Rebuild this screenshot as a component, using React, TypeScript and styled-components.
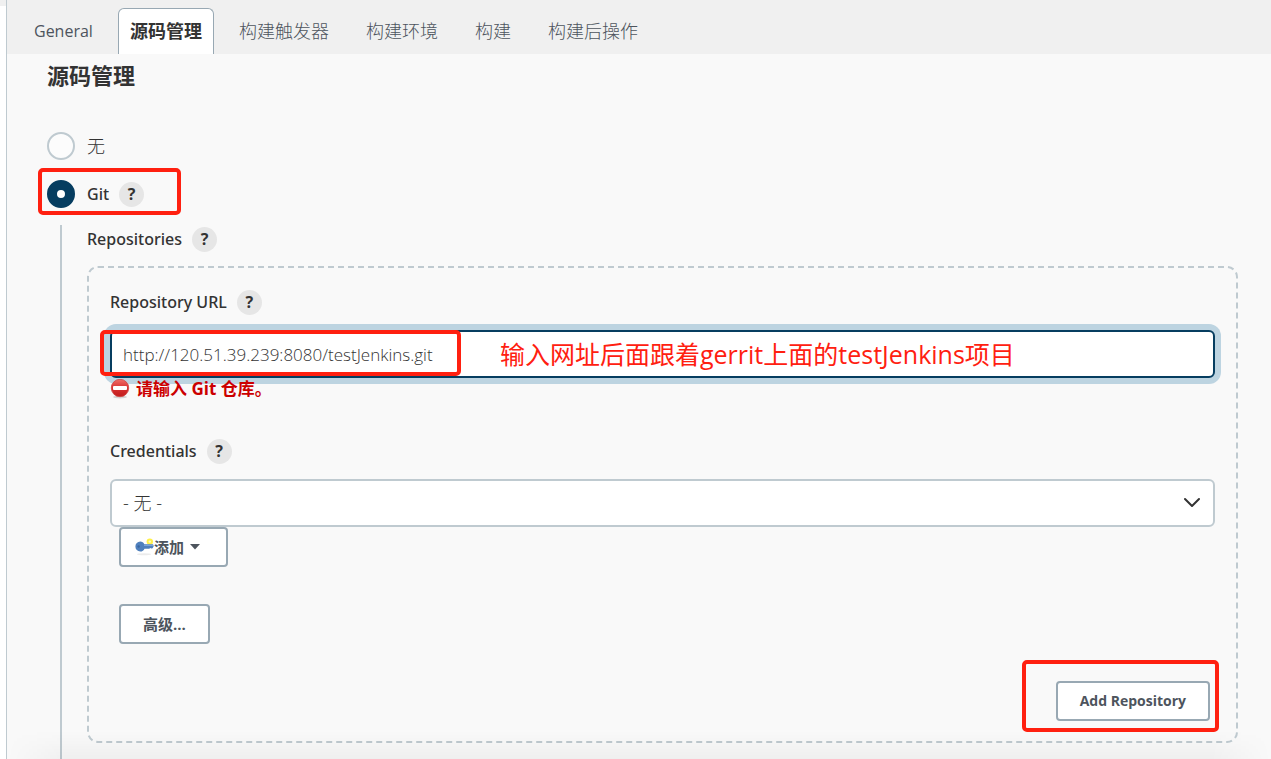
import React from "react";
import styled, { createGlobalStyle, css } from "styled-components";

const GlobalStyle = createGlobalStyle`
  *, *::before, *::after { box-sizing: border-box; }
  body {
    margin: 0;
    background: #fff;
    color: #333;
    font: 16px/24px "Open Sans", "Noto Sans", "Noto Sans CJK SC", sans-serif;
  }
  button, input, select { font: inherit; color: inherit; }
`;

const Page = styled.div`
  position: relative;
  min-height: 100vh;
  padding-left: 6px;
  overflow: hidden;
  background: linear-gradient(#f0f0f0, #f0f0f0) 0 0 / 30px 6px no-repeat #fff;
`;

const Panel = styled.main`
  min-height: 100vh;
  background: #f9f9f9;
  border-left: 1px solid #bfcad0;
`;

const TabBar = styled.nav`
  display: flex;
  align-items: flex-end;
  gap: 13px;
  height: 54px;
  padding-left: 15px;
  background: #f0f0f0;
`;

const Tab = styled.a<{ $active?: boolean; $latin?: boolean }>`
  height: 46px;
  padding: 0 11px;
  border: 1px solid transparent;
  border-bottom: 0;
  border-radius: 6px 6px 0 0;
  font-size: ${(p) => (p.$latin ? 16 : 18)}px;
  font-weight: ${(p) => (p.$latin ? 400 : 300)};
  line-height: 45px;
  color: #4d545d;
  text-decoration: none;
  white-space: nowrap;
  ${(p) =>
    p.$active &&
    css`
      background: #fff;
      border-color: #98a8b3;
      color: #333;
      font-weight: 700;
    `}
`;

const Content = styled.div`
  padding: 5px 33px 0 40px;
`;

const Heading = styled.h2`
  margin: 0 0 41px;
  font-size: 22px;
  line-height: 32px;
`;

const RadioRow = styled.div`
  position: relative;
  display: flex;
  align-items: center;
  width: max-content;
  height: 28px;
  margin-bottom: 20px;
`;

const RadioLabel = styled.label<{ $large?: boolean }>`
  display: flex;
  align-items: center;
  gap: 12px;
  font-family: "Noto Sans", "Noto Sans CJK SC", sans-serif;
  font-size: ${(p) => (p.$large ? 18 : 16)}px;
  font-weight: ${(p) => (p.$large ? 300 : 500)};
`;

const Radio = styled.input.attrs({ type: "radio" })`
  appearance: none;
  width: 28px;
  height: 28px;
  margin: 0;
  border: 2px solid #bfcad0;
  border-radius: 50%;
  background: #fcfcfc;
  &:checked {
    border: 10px solid #063d60;
    background: #fff;
  }
`;

const HelpButton = styled.button`
  width: 25px;
  height: 25px;
  margin-left: 10px;
  padding: 0;
  border: 0;
  border-radius: 50%;
  background: #e6e6e6;
  font-size: 16px;
  font-weight: 700;
  line-height: 25px;
  text-align: center;
`;

const Nested = styled.section`
  margin: -3px 0 0 13px;
  padding: 1px 0 16px 25px;
  border-left: 2px solid #bfcad0;
`;

const LabelRow = styled.div`
  display: flex;
  align-items: center;
  height: 26px;
  font-family: "Noto Sans", "Noto Sans CJK SC", sans-serif;
  font-weight: 500;
`;

const DashedFrame = styled.svg`
  position: absolute;
  inset: 0;
  width: 100%;
  height: 100%;
  overflow: hidden;
  pointer-events: none;
`;

const RepoBox = styled.div`
  position: relative;
  margin-top: 14px;
  padding: 23px 23px 22px;
`;

const Field = styled.div`
  position: relative;
  margin-top: 15px;
`;

const TextBox = styled.input`
  display: block;
  width: 100%;
  height: 48px;
  padding: 0 11px;
  border: 2px solid #063d60;
  border-radius: 6px;
  outline: 0;
  background: #fff;
  box-shadow: 0 0 0 6px #bdd4e1;
  font-size: 17px;
  font-weight: 300;
`;

const Select = styled.select`
  appearance: none;
  display: block;
  width: 100%;
  height: 48px;
  padding: 0 11px;
  border: 2px solid #bfcad0;
  border-radius: 6px;
  background: #fff;
  font-size: 18px;
  font-weight: 300;
`;

const Chevron = styled.svg`
  position: absolute;
  top: 18px;
  right: 15px;
  width: 16px;
  height: 12px;
  pointer-events: none;
`;

const ErrorMessage = styled.p`
  position: relative;
  display: flex;
  align-items: center;
  gap: 6px;
  margin: 0 0 38px;
  height: 22px;
  color: #c00;
  font-size: 17px;
  font-weight: 700;
`;

const Actions = styled.div<{ $end?: boolean; $gap: number }>`
  display: flex;
  justify-content: ${(p) => (p.$end ? "flex-end" : "flex-start")};
  margin-top: ${(p) => p.$gap}px;
  padding: 0 ${(p) => (p.$end ? 5 : 9)}px;
`;

const Anchor = styled.div`
  position: relative;
`;

const Button = styled.button`
  display: flex;
  align-items: center;
  height: 40px;
  padding: 0 22px;
  border: 2px solid #98a8b3;
  border-radius: 4px;
  background: #fff;
  color: #4d545d;
  font-size: 14px;
  font-weight: 700;
`;

const MenuButton = styled(Button)`
  padding: 0 26px 0 14px;
  font-size: 15px;
`;

const MoreButton = styled(Button)`
  font-size: 15px;
`;

const Marker = styled.span<{ $inset: string }>`
  position: absolute;
  inset: ${(p) => p.$inset};
  border: 4px solid #ff2010;
  border-radius: 5px;
  pointer-events: none;
`;

const UrlMarker = styled(Marker)`
  width: 361px;
`;

const Note = styled.span`
  position: absolute;
  top: 6px;
  left: 390px;
  color: #ff2010;
  font-size: 25px;
  line-height: 36px;
  white-space: nowrap;
  pointer-events: none;
`;

const BottomShade = styled.div`
  position: absolute;
  right: 0;
  bottom: 0;
  left: 7px;
  height: 28px;
  background: linear-gradient(to bottom, rgba(0, 0, 0, 0), rgba(0, 0, 0, 0.04));
  mask-image: linear-gradient(to right, transparent, #000 60px calc(100% - 60px), transparent);
  pointer-events: none;
`;

const Help = ({ topic }: { topic: string }) => (
  <HelpButton type="button" aria-label={`Help: ${topic}`}>
    ?
  </HelpButton>
);

const StopIcon = () => (
  <svg width="20" height="20" viewBox="0 0 20 20" aria-hidden="true">
    <defs>
      <linearGradient id="stop" x2="0" y2="1">
        <stop offset="0" stopColor="#f0706a" />
        <stop offset="0.5" stopColor="#d83030" />
        <stop offset="1" stopColor="#c01c1c" />
      </linearGradient>
    </defs>
    <ellipse cx="10" cy="18" rx="7" ry="1.5" fill="#000" opacity="0.15" />
    <circle cx="10" cy="9" r="8.7" fill="url(#stop)" stroke="#d04444" strokeWidth="0.8" />
    <rect x="3" y="7" width="14" height="4" rx="1" fill="#fff" />
  </svg>
);

const KeyIcon = () => (
  <svg width="19" height="18" viewBox="0 0 19 18" aria-hidden="true">
    <ellipse cx="9" cy="16.3" rx="7" ry="1" fill="#000" opacity="0.08" />
    <circle cx="14.8" cy="3.6" r="3.2" fill="#fff04a" />
    <circle cx="14.8" cy="3.6" r="1.2" fill="#fffbc0" />
    <path
      d="M5.2 3.6c2 0 3.4 1 4.1 2.6H18l.8 1.9-1.2 2.1-1.4.4-.8-.7-1.2.8H9.5c-.7 1.8-2.2 2.9-4.3 2.9A4.9 4.9 0 0 1 .4 8.6a4.9 4.9 0 0 1 4.8-5Z"
      fill="#4f80bd"
    />
    <path d="M9 7.4h9" stroke="#7fa8dc" strokeWidth="1" />
    <circle cx="3.6" cy="8.5" r="1.2" fill="#38659e" />
  </svg>
);

const Caret = styled.svg`
  margin-left: 6px;
`;

const tabs = ["General", "源码管理", "构建触发器", "构建环境", "构建", "构建后操作"];

export default function App() {
  return (
    <Page>
      <GlobalStyle />
      <Panel>
        <TabBar>
          {tabs.map((name, i) => (
            <Tab key={name} href="#" $latin={i === 0} $active={i === 1}>
              {name}
            </Tab>
          ))}
        </TabBar>
        <Content>
          <Heading>源码管理</Heading>
          <RadioRow>
            <RadioLabel $large>
              <Radio name="scm" />无
            </RadioLabel>
          </RadioRow>
          <RadioRow>
            <RadioLabel>
              <Radio name="scm" defaultChecked />
              Git
            </RadioLabel>
            <Help topic="Git" />
            <Marker $inset="-12px -37px -7px -9px" />
          </RadioRow>
          <Nested>
            <LabelRow>
              Repositories
              <Help topic="Repositories" />
            </LabelRow>
            <RepoBox>
              <DashedFrame aria-hidden="true">
                <rect
                  x="1"
                  y="1"
                  rx="10"
                  fill="none"
                  stroke="#bfcad0"
                  strokeWidth="2"
                  strokeDasharray="6 4"
                  style={{ width: "calc(100% - 2px)", height: "calc(100% - 2px)" }}
                />
              </DashedFrame>
              <LabelRow>
                <label htmlFor="url">Repository URL</label>
                <Help topic="Repository URL" />
              </LabelRow>
              <Field>
                <TextBox id="url" type="text" defaultValue="http://120.51.39.239:8080/testJenkins.git" />
                <UrlMarker $inset="0 auto 2px -10px" />
                <Note>输入网址后面跟着gerrit上面的testJenkins项目</Note>
              </Field>
              <ErrorMessage role="alert">
                <StopIcon />
                请输入 Git 仓库。
              </ErrorMessage>
              <LabelRow>
                <label htmlFor="credentials">Credentials</label>
                <Help topic="Credentials" />
              </LabelRow>
              <Field>
                <Select id="credentials">
                  <option>- 无 -</option>
                </Select>
                <Chevron viewBox="0 0 16 12" fill="none" stroke="#333" strokeWidth="2" aria-hidden="true">
                  <path d="m1 2 7 7 7-7" strokeLinecap="round" strokeLinejoin="round" />
                </Chevron>
              </Field>
              <Actions $gap={0}>
                <MenuButton type="button">
                  <KeyIcon />
                  添加
                  <Caret width="10" height="6" viewBox="0 0 10 6" aria-hidden="true">
                    <path d="M0 0h10L5 5.5Z" fill="#4d545d" />
                  </Caret>
                </MenuButton>
              </Actions>
              <Actions $gap={37}>
                <MoreButton type="button">高级...</MoreButton>
              </Actions>
              <Actions $gap={37} $end>
                <Anchor>
                  <Button type="button">Add Repository</Button>
                  <Marker $inset="-21px -9px -11px -34px" />
                </Anchor>
              </Actions>
            </RepoBox>
          </Nested>
        </Content>
      </Panel>
      <BottomShade />
    </Page>
  );
}
